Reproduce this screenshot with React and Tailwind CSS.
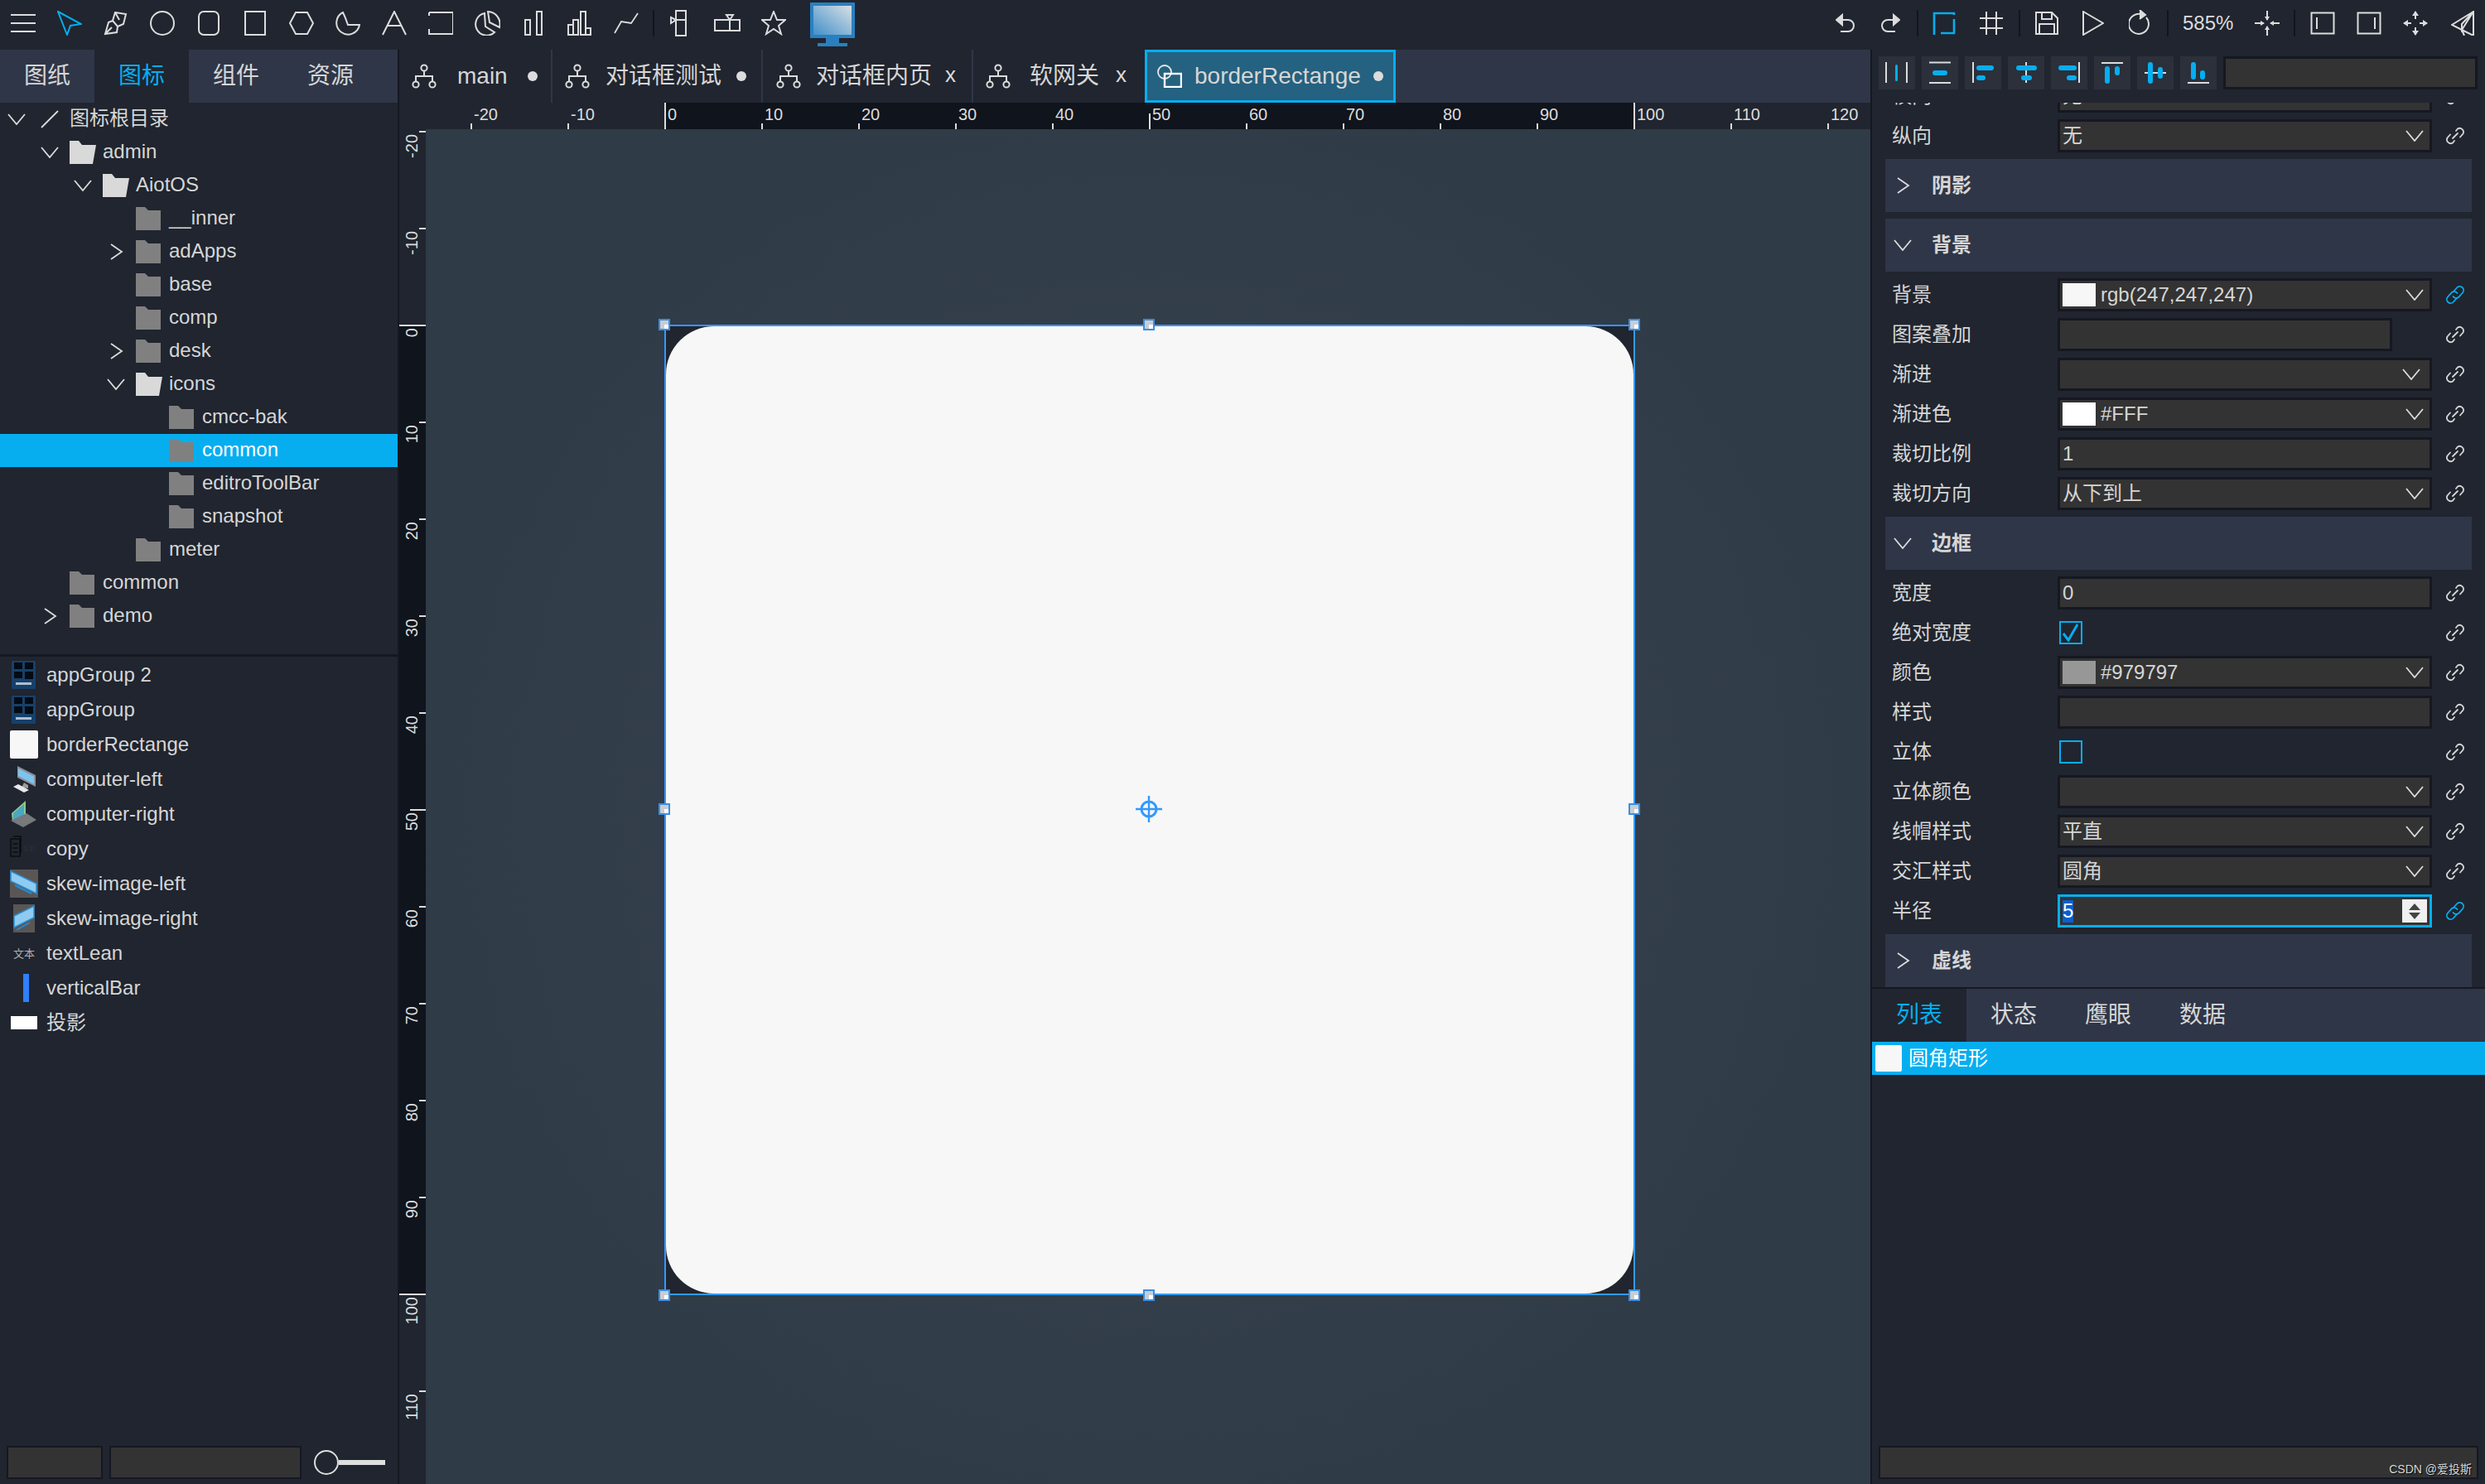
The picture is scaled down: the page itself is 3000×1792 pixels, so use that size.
import React from "react";

const FONT = "[font-family:'Liberation_Sans','Noto_Sans_CJK_SC',sans-serif]";

function S({ w = 30, h = 30, c = "#dcdcdc", sw = 2, children, className = "" }) {
  return (
    <svg width={w} height={h} viewBox={`0 0 ${w} ${h}`} fill="none" stroke={c} strokeWidth={sw} className={"shrink-0 " + className}>
      {children}
    </svg>
  );
}

const toolIcons = [
  <S><path d="M0 5H30M0 15H30M0 25H30" /></S>,
  <S c="#06aef0"><path d="M1 1L29 16L16 18L12 29Z" /></S>,
  <S><path d="M14 2L27 4L24 16L17 19L11 12Z M14 2L19 11 M11 12L6 14L2 28L16 26L17 19 M2 28L10 20" /></S>,
  <S><circle cx="15" cy="15" r="14" /></S>,
  <S><rect x="3" y="1" width="24" height="28" rx="6" /></S>,
  <S><rect x="3" y="1" width="24" height="28" /></S>,
  <S><path d="M1 15L8 2H22L29 15L22 28H8Z" /></S>,
  <S><path d="M9 2A14 14 0 1 0 29 17L15 17Q12 8 9 2Z" /></S>,
  <S><path d="M1 29L15 1L29 29M7 18H23" /></S>,
  <S><path d="M1 2H30V28H1V22M1 2V6" /></S>,
  <S w={32} h={30}><path d="M13 3A13.5 13.5 0 1 0 25 26L14 19Z" /><path d="M17 1A15 15 0 0 1 31 20L19 14Z" /></S>,
  <S w={22} h={30}><rect x="1" y="11" width="6" height="18" /><rect x="15" y="1" width="6" height="28" /></S>,
  <S><rect x="1" y="17" width="6" height="12" /><rect x="7" y="11" width="6" height="18" /><rect x="16" y="1" width="6" height="28" /><rect x="22" y="21" width="6" height="8" /></S>,
  <S sw={1.8}><path d="M1 27L9 13L21 15L29 3" /></S>,
];

function TopToolbar() {
  return (
    <div className="flex h-[60px] shrink-0 items-center bg-[#20252f] pb-[4px]">
      {toolIcons.map((ic, i) => (
        <div key={i} className="flex h-[56px] w-[56px] shrink-0 items-center justify-center">{ic}</div>
      ))}
      <div className="ml-[4px] h-[32px] w-[2px] bg-[#12151c]" />
      <div className="ml-[2px] flex w-[56px] justify-center">
        <S w={22} h={32}><path d="M7 1H19V31H7Z M7 12H19 M1 9L7 12L1 16Z" /></S>
      </div>
      <div className="ml-[2px] flex w-[56px] justify-center">
        <S w={32} h={30}><rect x="1" y="11" width="30" height="13" /><path d="M19 11V24M15 5H23L19 11Z" /></S>
      </div>
      <div className="flex w-[56px] justify-center">
        <S><path d="M15 1L19 11L29 11L21 18L24 28L15 22L6 28L9 18L1 11L11 11Z" /></S>
      </div>
      <div className="ml-[16px] mt-[4px] h-[54px] w-[54px]">
        <svg width="54" height="54" viewBox="0 0 54 54">
          <defs>
            <linearGradient id="mon" x1="0" y1="1" x2="1" y2="0">
              <stop offset="0" stopColor="#3a8cc8" />
              <stop offset="1" stopColor="#e0e3e6" />
            </linearGradient>
          </defs>
          <rect x="2" y="2" width="50" height="39" fill="url(#mon)" stroke="#2a7fc0" strokeWidth="4" />
          <rect x="19" y="42" width="16" height="7" fill="#2a7fc0" />
          <rect x="9" y="49" width="36" height="4" fill="#2a7fc0" />
        </svg>
      </div>
      <div className="ml-auto flex items-center">
        <div className="flex w-[54px] justify-center"><S w={24} h={24}><path d="M8 8H15A7 7 0 0 1 15 22H6" /><path d="M1 8L8 2V14Z" fill="#dcdcdc" /></S></div>
        <div className="mr-[5px] flex w-[54px] justify-center"><S w={24} h={24}><path d="M16 8H9A7 7 0 0 0 9 22H18" /><path d="M23 8L16 2V14Z" fill="#dcdcdc" /></S></div>
        <div className="h-[32px] w-[2px] bg-[#12151c]" />
        <div className="ml-[17px] mr-[29px]"><S w={28} h={28} c="#06aef0" sw={2.6}><path d="M2 28V2H26V4M26 9V26H10" /></S></div>
        <div className="mr-[19px]"><S w={28} h={28}><path d="M8 0V28M20 0V28M0 8H28M0 20H28" /></S></div>
        <div className="h-[32px] w-[2px] bg-[#12151c]" />
        <div className="ml-[18px] mr-[29px]"><S w={28} h={28}><path d="M1 1H20L27 8V27H1Z M8 1V9H20V1M5 15H23V27H5Z" /></S></div>
        <div className="mr-[30px]"><S w={26} h={30}><path d="M1 1L25 15L1 29Z" /></S></div>
        <div className="mr-[20px]"><S w={26} h={32}><path d="M17 6A12 12 0 1 0 21 9" /><path d="M13 0L20 6L13 11" fill="#dcdcdc" /></S></div>
        <div className="h-[32px] w-[2px] bg-[#12151c]" />
        <div className="ml-[17px] w-[62px] text-[24px] leading-none text-[#dcdcdc]">585%</div>
        <div className="ml-[25px] mr-[17px]"><S w={30} h={30}><path d="M15 0V11M15 19V30M0 15H11M19 15H30" /><path d="M15 12L12 7H18ZM15 18L12 23H18ZM12 15L7 12V18ZM18 15L23 12V18Z" fill="#dcdcdc" stroke="none" /></S></div>
        <div className="h-[32px] w-[2px] bg-[#12151c]" />
        <div className="ml-[18px] mr-[26px]"><S w={30} h={28}><rect x="1.5" y="1.5" width="27" height="25" /><path d="M8 7V21" /></S></div>
        <div className="mr-[26px]"><S w={30} h={28}><rect x="1.5" y="1.5" width="27" height="25" /><path d="M22 7V21" /></S></div>
        <div className="mr-[28px]"><S w={30} h={30}><path d="M15 1V10M15 20V29M1 15H10M20 15H29" /><path d="M15 0L11 6H19ZM15 30L11 24H19ZM0 15L6 11V19ZM30 15L24 11V19Z" fill="#dcdcdc" stroke="none" /></S></div>
        <div className="mr-[13px]"><S w={28} h={30}><path d="M27 1L1 17L13 23L27 30Z M27 1L13 23V16ZM13 23L16 30" /></S></div>
      </div>
    </div>
  );
}

const FolderClosed = () => (
  <svg width="30" height="28" viewBox="0 0 30 28" className="shrink-0"><path d="M0 0H11L15 4H30V28H0Z" fill="#808080" /></svg>
);
const FolderOpen = () => (
  <svg width="32" height="28" viewBox="0 0 32 28" className="shrink-0"><path d="M0 0H11L15 5H32L28 28H0Z" fill="#d9d9d9" /></svg>
);
const ChevD = ({ className = "" }) => (
  <svg width="22" height="14" viewBox="0 0 22 14" className={"shrink-0 " + className} fill="none" stroke="#dcdcdc" strokeWidth="1.8"><path d="M1 1L11 13L21 1" /></svg>
);
const ChevR = () => (
  <svg width="20" height="20" viewBox="0 0 20 20" className="shrink-0" fill="none" stroke="#dcdcdc" strokeWidth="1.8"><path d="M4 1L17 10L4 19" /></svg>
);

const treeRows = [
  { t: "图标根目录", pl: "pl-[10px]", a: "d", f: "slash" },
  { t: "admin", pl: "pl-[50px]", a: "d", f: "open" },
  { t: "AiotOS", pl: "pl-[90px]", a: "d", f: "open" },
  { t: "__inner", pl: "pl-[130px]", f: "c" },
  { t: "adApps", pl: "pl-[130px]", a: "r", f: "c" },
  { t: "base", pl: "pl-[130px]", f: "c" },
  { t: "comp", pl: "pl-[130px]", f: "c" },
  { t: "desk", pl: "pl-[130px]", a: "r", f: "c" },
  { t: "icons", pl: "pl-[130px]", a: "d", f: "open" },
  { t: "cmcc-bak", pl: "pl-[170px]", f: "c" },
  { t: "common", pl: "pl-[170px]", f: "c", on: true },
  { t: "editroToolBar", pl: "pl-[170px]", f: "c" },
  { t: "snapshot", pl: "pl-[170px]", f: "c" },
  { t: "meter", pl: "pl-[130px]", f: "c" },
  { t: "common", pl: "pl-[50px]", f: "c" },
  { t: "demo", pl: "pl-[50px]", a: "r", f: "c" },
];

function Tree() {
  return (
    <div className="h-[666px] shrink-0">
      {treeRows.map((r, i) => (
        <div key={i} className={"flex h-[40px] items-center text-[24px] " + r.pl + " " + (r.on ? "bg-[#06aef0] text-white" : "text-[#d6d6d6]")}>
          <div className="flex w-[20px] shrink-0 justify-center">
            {r.a === "d" && <ChevD />}
            {r.a === "r" && <ChevR />}
          </div>
          <div className="ml-[14px] flex w-[32px] shrink-0 justify-start">
            {r.f === "c" && <FolderClosed />}
            {r.f === "open" && <FolderOpen />}
            {r.f === "slash" && (
              <svg width="32" height="22" viewBox="0 0 32 22" fill="none" stroke="#dcdcdc" strokeWidth="1.8"><path d="M6 21L26 1" /></svg>
            )}
          </div>
          <span className="-mt-[2px] ml-[8px] whitespace-nowrap leading-none">{r.t}</span>
        </div>
      ))}
    </div>
  );
}

const AppThumb = () => (
  <svg width="34" height="34" viewBox="0 0 34 34">
    <rect x="2" y="0" width="29" height="34" rx="1" fill="#17406a" />
    <rect x="5" y="2" width="10" height="8" fill="#050b12" /><rect x="18" y="2" width="10" height="8" fill="#050b12" />
    <rect x="5" y="13" width="10" height="8" fill="#050b12" /><rect x="18" y="13" width="10" height="9" fill="#050b12" />
    <rect x="7" y="26" width="19" height="3" fill="#a9c0d0" />
  </svg>
);

const listItems = [
  ["appGroup 2", <AppThumb />],
  ["appGroup", <AppThumb />],
  ["borderRectange", <div className="h-[34px] w-[34px] rounded-[2px] bg-[#f7f7f7]" />],
  ["computer-left", (
    <svg width="34" height="34" viewBox="0 0 34 34">
      <path d="M9 1L31 12V26L9 15Z" fill="#8b8f96" />
      <path d="M10 4L29 13.5V23L10 13Z" fill="#7cc4ee" />
      <path d="M17 21L22 24V28L14 27Z" fill="#9a9a9a" />
      <path d="M4 26L10 23L23 30L17 33Z" fill="#e8e8e8" />
    </svg>
  )],
  ["computer-right", (
    <svg width="34" height="34" viewBox="0 0 34 34">
      <path d="M2 16L19 1V21L3 26Z" fill="#8fc98d" />
      <path d="M4 16L17 5V19L4 24Z" fill="#4aa7c4" />
      <path d="M1 25L20 16L32 24L16 33Z" fill="#77797d" />
    </svg>
  )],
  ["copy", (
    <svg width="34" height="34" viewBox="0 0 34 34" fill="none" stroke="#0a0c10" strokeWidth="1.5">
      <rect x="1" y="5" width="11" height="21" /><path d="M4 2H13V22M3.5 11H9.5M3.5 16H9.5M3.5 21H9.5" />
      <text x="16" y="19" fontSize="7" fill="#2c3038" stroke="none">复制</text>
    </svg>
  )],
  ["skew-image-left", (
    <svg width="34" height="34" viewBox="0 0 34 34">
      <rect width="34" height="34" fill="#5a5654" />
      <path d="M1 2L32 17V29L1 14Z" fill="#8fcbf0" stroke="#2a8ad0" strokeWidth="1.5" />
      <path d="M6 19L26 29" stroke="#2a8ad0" strokeWidth="2" />
    </svg>
  )],
  ["skew-image-right", (
    <div className="flex w-[34px] justify-center">
      <svg width="26" height="34" viewBox="0 0 26 34">
        <rect width="26" height="34" fill="#5a5654" />
        <path d="M1 14L25 2V16L1 28Z" fill="#8fcbf0" stroke="#2a8ad0" strokeWidth="1.5" />
        <path d="M4 31L20 22" stroke="#2a8ad0" strokeWidth="2" />
      </svg>
    </div>
  )],
  ["textLean", <div className="flex h-[34px] w-[34px] items-center justify-center text-[13px] leading-none text-[#b0b0b0]">文本</div>],
  ["verticalBar", <div className="flex h-[34px] w-[34px] justify-center pl-[4px]"><div className="h-[34px] w-[7px] bg-[#2f7fff]" /></div>],
  ["投影", <div className="flex h-[34px] w-[34px] items-center justify-center"><div className="h-[16px] w-[32px] bg-white" /></div>],
];

function AssetList() {
  return (
    <div className="flex-1 border-t-[3px] border-[#151821] pt-[1px]">
      {listItems.map(([t, ic], i) => (
        <div key={i} className="flex h-[42px] items-center pl-[12px] text-[24px] text-[#d6d6d6]">
          <div className="h-[34px] w-[34px] shrink-0">{ic}</div>
          <span className="ml-[10px] whitespace-nowrap leading-none">{t}</span>
        </div>
      ))}
    </div>
  );
}

function LeftPanel() {
  const tabs = ["图纸", "图标", "组件", "资源"];
  return (
    <div className="flex h-full w-[482px] shrink-0 flex-col border-r-2 border-[#151821]">
      <div className="flex h-[64px] shrink-0">
        {tabs.map((t, i) => (
          <div key={t} className={"flex h-[64px] w-[114px] items-center justify-center text-[28px] " + (i === 1 ? "bg-[#20252f] text-[#06aef0]" : "bg-[#2f3648] text-[#d6d6d6]")}>{t}</div>
        ))}
        <div className="flex-1 bg-[#2f3648]" />
      </div>
      <Tree />
      <AssetList />
      <div className="flex h-[46px] shrink-0 items-start pl-[8px]">
        <div className="h-[40px] w-[116px] border-2 border-[#151821] bg-[#333333]" />
        <div className="ml-[8px] h-[40px] w-[232px] border-2 border-[#151821] bg-[#333333]" />
        <div className="ml-[15px] mt-[5px] flex items-center">
          <div className="h-[30px] w-[30px] rounded-full border-2 border-[#dcdcdc]" />
          <div className="h-[6px] w-[56px] bg-[#dfdfdf]" />
        </div>
      </div>
    </div>
  );
}

const OrgIcon = () => (
  <S><circle cx="15" cy="5" r="3.6" /><path d="M15 9V15M5 21V15H25V21" /><circle cx="5" cy="25" r="3.6" /><circle cx="25" cy="25" r="3.6" /></S>
);
const Dot = () => <div className="h-[12px] w-[12px] shrink-0 rounded-full bg-[#dcdcdc]" />;
const X = () => <span className="-mt-[5px] block text-[26px] leading-none text-[#dcdcdc]">x</span>;

function TabsBar() {
  return (
    <div className="flex h-[64px] shrink-0 bg-[#2f3648] text-[28px] text-[#d6d6d6]">
      <div className="flex w-[185px] items-center border-r-2 border-[#2f3648] bg-[#20252f] pl-[15px]">
        <OrgIcon /><span className="ml-[25px] leading-none">main</span><div className="ml-[24px]"><Dot /></div>
      </div>
      <div className="flex w-[254px] items-center border-r-2 border-[#2f3648] bg-[#20252f] pl-[15px]">
        <OrgIcon /><span className="ml-[19px] leading-none">对话框测试</span><div className="ml-[18px]"><Dot /></div>
      </div>
      <div className="flex w-[254px] items-center border-r-2 border-[#2f3648] bg-[#20252f] pl-[16px]">
        <OrgIcon /><span className="ml-[18px] leading-none">对话框内页</span><div className="ml-[16px]"><X /></div>
      </div>
      <div className="flex w-[207px] items-center bg-[#20252f] pl-[15px]">
        <OrgIcon /><span className="ml-[23px] leading-none">软网关</span><div className="ml-[20px]"><X /></div>
      </div>
      <div className="flex w-[303px] items-center border-[3px] border-[#06aef0] bg-[#256180] pl-[12px]">
        <svg width="30" height="28" viewBox="0 0 30 28" fill="none" stroke="#e8e8e8" strokeWidth="1.8" className="shrink-0">
          <circle cx="9" cy="9" r="8" />
          <rect x="9" y="11" width="20" height="16" stroke="#fff" strokeWidth="2.4" />
        </svg>
        <span className="ml-[15px] leading-none">borderRectange</span>
        <div className="ml-[15px]"><Dot /></div>
      </div>
    </div>
  );
}

const hTicks = [-20, -10, 0, 10, 20, 30, 40, 50, 60, 70, 80, 90, 100, 110, 120];
const vTicks = [-20, -10, 0, 10, 20, 30, 40, 50, 60, 70, 80, 90, 100, 110];

function TopRuler() {
  return (
    <div className="flex h-[32px] shrink-0 overflow-hidden bg-[#20252f] text-[20px] leading-none text-[#dcdcdc]">
      <div className="w-[86px] shrink-0" />
      {hTicks.map((v) => (
        <div key={v} className={"relative h-[32px] w-[117px] shrink-0 " + (v >= 0 && v < 100 ? "bg-[#10141c]" : "")}>
          <div className={"absolute bottom-0 left-0 w-[2px] bg-[#dcdcdc] " + (v % 100 === 0 ? "h-[32px]" : v % 50 === 0 ? "h-[19px]" : "h-[7px]")} />
          <span className="absolute left-[4px] top-[4px]">{v}</span>
        </div>
      ))}
    </div>
  );
}

function LeftRuler() {
  return (
    <div className="flex h-full w-[32px] shrink-0 flex-col overflow-hidden bg-[#20252f] text-[20px] leading-none text-[#dcdcdc]">
      <div className="h-[2px] shrink-0" />
      {vTicks.map((v) => (
        <div key={v} className={"relative h-[117px] w-[32px] shrink-0 " + (v >= 0 && v < 100 ? "bg-[#10141c]" : "")}>
          <div className={"absolute right-0 top-0 h-[2px] bg-[#dcdcdc] " + (v % 100 === 0 ? "w-[32px]" : v % 50 === 0 ? "w-[19px]" : "w-[8px]")} />
          <span className="absolute left-[5px] top-[4px] rotate-180 [writing-mode:vertical-rl]">{v}</span>
        </div>
      ))}
    </div>
  );
}

const Handle = ({ className }) => (
  <div className={"absolute h-[14px] w-[14px] border-2 border-[#3a8ee6] bg-[#c9cdd1] " + className}>
    <div className="absolute bottom-0 right-0 h-[5px] w-[5px] bg-white" />
  </div>
);

function Canvas() {
  return (
    <div className="flex min-h-0 flex-1">
      <LeftRuler />
      <div className="min-w-0 flex-1 bg-[radial-gradient(circle_at_50%_50%,#3a4450,#2f3b47_75%)] pl-[288px] pt-[236px]">
        <div className="relative h-[1172px] w-[1172px] border-2 border-[#3399ff] bg-[#20252f]">
          <div className="h-full w-full rounded-[58px] bg-[#f7f7f7]" />
          <Handle className="-left-[9px] -top-[9px]" />
          <Handle className="left-[576px] -top-[9px]" />
          <Handle className="-right-[8px] -top-[9px]" />
          <Handle className="-left-[9px] top-[576px]" />
          <Handle className="-right-[8px] top-[576px]" />
          <Handle className="-bottom-[9px] -left-[9px]" />
          <Handle className="-bottom-[9px] left-[576px]" />
          <Handle className="-bottom-[9px] -right-[8px]" />
          <svg width="32" height="32" viewBox="0 0 32 32" fill="none" stroke="#3399ff" strokeWidth="3" className="absolute left-[567px] top-[567px]">
            <circle cx="16" cy="16" r="9" />
            <path d="M16 0V32M0 16H32" strokeWidth="2.4" />
          </svg>
        </div>
      </div>
    </div>
  );
}

const Link = ({ on }) => (
  <svg width="24" height="24" viewBox="0 0 24 24" fill="none" stroke={on ? "#06aef0" : "#d6d6d6"} strokeWidth="1.8" className="shrink-0" strokeLinecap="round">
    {on ? (
      <>
        <path d="M10 8L14 3.5A4.6 4.6 0 0 1 21 9.5L16 15A4.6 4.6 0 0 1 9.5 14" />
        <path d="M14 16L10 20.5A4.6 4.6 0 0 1 3 14.5L8 9A4.6 4.6 0 0 1 14.5 10" />
      </>
    ) : (
      <>
        <path d="M13 6L15 3.5A4.6 4.6 0 0 1 21.5 9.5L18 13.5" />
        <path d="M11 18L9 20.5A4.6 4.6 0 0 1 2.5 14.5L6 10.5" />
        <path d="M9 15L15 9" />
      </>
    )}
  </svg>
);

function Row({ label, children, on, short, bare, blue }) {
  return (
    <div className="flex h-[48px] shrink-0 items-center pl-[24px]">
      <div className="w-[200px] shrink-0 whitespace-nowrap text-[24px] leading-none text-[#d6d6d6]">{label}</div>
      <div className="w-[452px] shrink-0">
        {bare ? children : (
          <div className={"flex h-[40px] items-center border-[3px] pl-[3px] text-[24px] leading-none text-[#d6d6d6] " + (short ? "w-[404px] " : "w-[452px] ") + (blue ? "border-[#06aef0] bg-[#333333]" : "border-[#151821] bg-[#333333]")}>
            {children}
          </div>
        )}
      </div>
      <div className="ml-[16px]"><Link on={on} /></div>
    </div>
  );
}

const Sel = ({ mr = "mr-[7px]" }) => <ChevD className={"ml-auto " + mr} />;
const Swatch = ({ c }) => <div className={"mr-[6px] h-[28px] w-[40px] shrink-0 " + c} />;

function Header({ label, open }) {
  return (
    <div className="mx-[16px] my-[4px] flex h-[64px] shrink-0 items-center bg-[#2f3648] pl-[10px]">
      <div className="flex w-[22px] justify-center">{open ? <ChevD /> : <ChevR />}</div>
      <span className="ml-[24px] text-[24px] font-bold leading-none text-[#d6d6d6]">{label}</span>
    </div>
  );
}

const Chk = ({ on }) => (
  <div className="ml-[2px] flex h-[28px] w-[28px] items-center justify-center border-2 border-[#06aef0]">
    {on && (
      <svg width="20" height="22" viewBox="0 0 20 22" fill="none" stroke="#06aef0" strokeWidth="3"><path d="M1 12L7 20L18 1" /></svg>
    )}
  </div>
);

function Props() {
  return (
    <div className="flex min-h-0 flex-1 flex-col overflow-hidden">
      <div className="-mt-[32px] flex flex-col">
        <Row label="横向"><span>无</span><Sel /></Row>
        <Row label="纵向"><span>无</span><Sel /></Row>
        <Header label="阴影" />
        <Header label="背景" open />
        <Row label="背景" on><Swatch c="bg-[#f7f7f7]" /><span>rgb(247,247,247)</span><Sel /></Row>
        <Row label="图案叠加" short />
        <Row label="渐进"><Sel mr="mr-[11px]" /></Row>
        <Row label="渐进色"><Swatch c="bg-white" /><span>#FFF</span><Sel /></Row>
        <Row label="裁切比例"><span>1</span></Row>
        <Row label="裁切方向"><span>从下到上</span><Sel /></Row>
        <Header label="边框" open />
        <Row label="宽度"><span>0</span></Row>
        <Row label="绝对宽度" bare><Chk on /></Row>
        <Row label="颜色"><Swatch c="bg-[#979797]" /><span>#979797</span><Sel /></Row>
        <Row label="样式" />
        <Row label="立体" bare><Chk /></Row>
        <Row label="立体颜色"><Sel /></Row>
        <Row label="线帽样式"><span>平直</span><Sel /></Row>
        <Row label="交汇样式"><span>圆角</span><Sel /></Row>
        <Row label="半径" on blue>
          <span className="flex h-[27px] w-[13px] items-center bg-[#0a5fd0] text-white">5</span>
          <div className="ml-auto mr-[3px] flex h-[28px] w-[30px] flex-col items-center justify-center gap-[3px] bg-[#f0f0f0]">
            <div className="h-0 w-0 border-x-[7px] border-b-[8px] border-x-transparent border-b-[#444444]" />
            <div className="h-0 w-0 border-x-[7px] border-t-[8px] border-x-transparent border-t-[#444444]" />
          </div>
        </Row>
        <Header label="虚线" />
      </div>
    </div>
  );
}

function AlignBtn({ children }) {
  return (
    <div className="h-[40px] w-[44px] shrink-0 bg-[#2b303b]">
      <svg width="44" height="40" viewBox="0 0 44 40" fill="none" stroke="#dcdcdc" strokeWidth="2">{children}</svg>
    </div>
  );
}
const P = ({ x, y, w, h }) => <rect x={x} y={y} width={w} height={h} rx={Math.min(w, h) / 2} fill="#06aef0" stroke="none" />;

function AlignBar() {
  return (
    <div className="flex h-[64px] shrink-0 items-start gap-[8px] pl-[8px] pt-[8px]">
      <AlignBtn><path d="M9 7V32M34 7V32" /><P x={20} y={10} w={3} h={20} /></AlignBtn>
      <AlignBtn><path d="M9 7.5H35M9 32H35" /><P x={13} y={17} w={18} h={6} /></AlignBtn>
      <AlignBtn><path d="M10 7V32" /><P x={14} y={11} w={21} h={6} /><P x={14} y={23} w={11} h={6} /></AlignBtn>
      <AlignBtn><path d="M22 7V32" /><P x={10} y={11} w={25} h={6} /><P x={16} y={23} w={13} h={6} /></AlignBtn>
      <AlignBtn><path d="M34 7V32" /><P x={9} y={11} w={22} h={6} /><P x={19} y={23} w={12} h={6} /></AlignBtn>
      <AlignBtn><path d="M9 8H35" /><P x={13} y={12} w={6} h={21} /><P x={25} y={12} w={6} h={11} /></AlignBtn>
      <AlignBtn><path d="M9 20H35" /><P x={13} y={7} w={6} h={26} /><P x={25} y={13} w={6} h={14} /></AlignBtn>
      <AlignBtn><path d="M9 32H35" /><P x={13} y={7} w={6} h={21} /><P x={24} y={17} w={6} h={11} /></AlignBtn>
      <div className="h-[40px] w-[307px] border-[3px] border-[#151821] bg-[#333333]" />
    </div>
  );
}

function RightPanel() {
  const tabs = ["列表", "状态", "鹰眼", "数据"];
  return (
    <div className="flex h-full w-[742px] shrink-0 flex-col border-l-2 border-[#151821]">
      <AlignBar />
      <div className="flex h-[1068px] shrink-0 flex-col">
        <Props />
      </div>
      <div className="flex h-[66px] shrink-0 border-t-2 border-[#151821] bg-[#2f3648]">
        {tabs.map((t, i) => (
          <div key={t} className={"flex h-[64px] w-[114px] items-center justify-center text-[28px] " + (i === 0 ? "bg-[#20252f] text-[#06aef0]" : "text-[#d6d6d6]")}>{t}</div>
        ))}
      </div>
      <div className="flex h-[40px] shrink-0 items-center bg-[#06aef0] pl-[4px]">
        <div className="h-[32px] w-[32px] rounded-[2px] bg-[#f7f7f7]" />
        <span className="ml-[8px] text-[24px] leading-none text-white">圆角矩形</span>
      </div>
      <div className="flex-1" />
      <div className="mb-[6px] ml-[8px] flex h-[40px] w-[724px] shrink-0 items-end justify-end border-2 border-[#151821] bg-[#333333] pb-[3px] pr-[6px]">
        <span className="text-[14px] leading-none text-[#d8d8d8] [text-shadow:1px_1px_1px_#000]">CSDN @爱投斯</span>
      </div>
    </div>
  );
}

export default function App() {
  return (
    <div className={"flex h-[1792px] w-[3000px] flex-col overflow-hidden bg-[#20252f] " + FONT}>
      <TopToolbar />
      <div className="flex min-h-0 flex-1">
        <LeftPanel />
        <div className="flex h-full min-w-0 flex-1 flex-col">
          <TabsBar />
          <TopRuler />
          <Canvas />
        </div>
        <RightPanel />
      </div>
    </div>
  );
}
